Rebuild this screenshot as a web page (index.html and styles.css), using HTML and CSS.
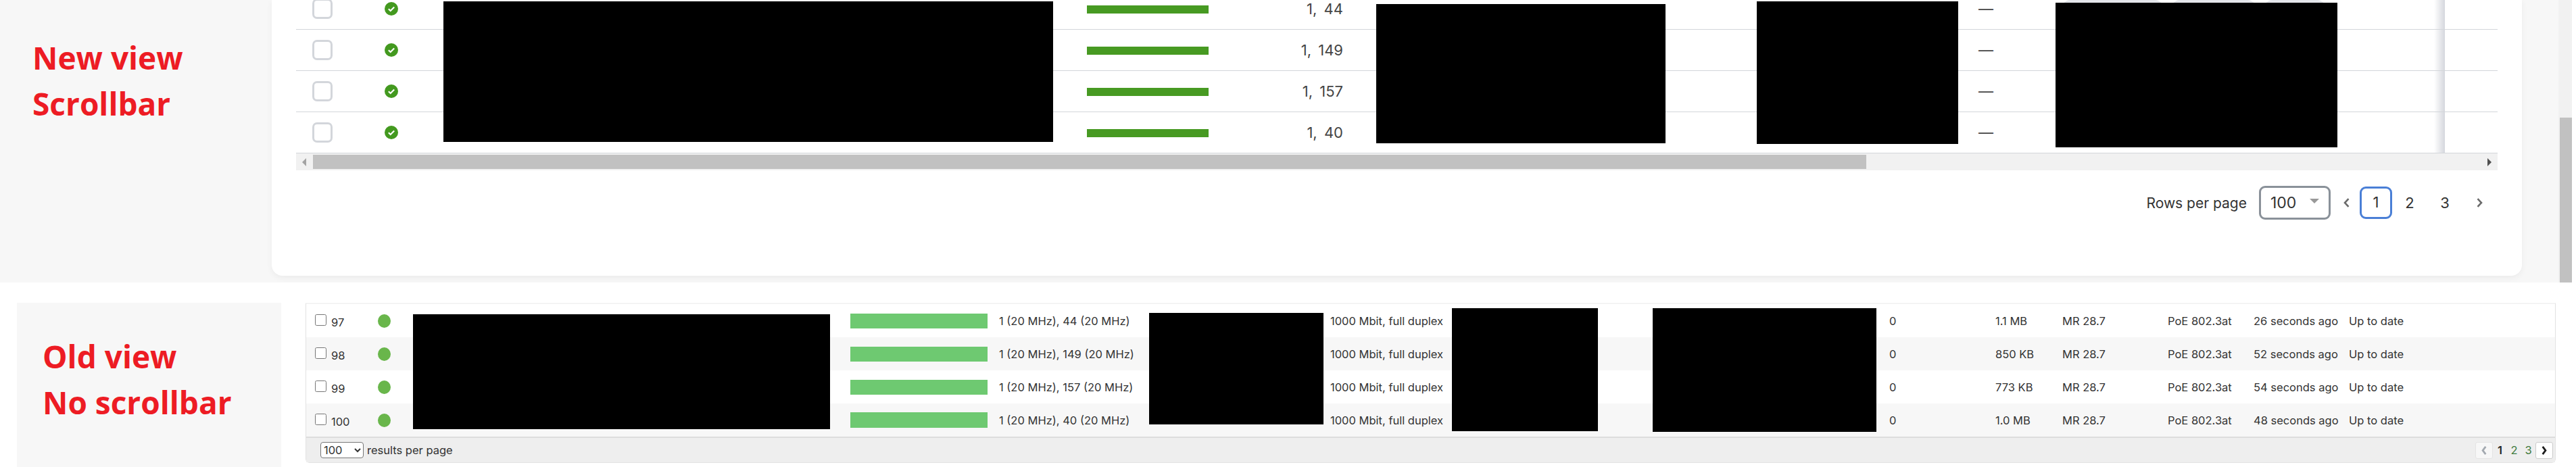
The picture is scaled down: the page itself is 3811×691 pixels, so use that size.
FILE: index.html
```html
<!DOCTYPE html>
<html lang="en">
<head>
  <meta charset="UTF-8" />
  <title>New view vs old view</title>
  <meta name="viewport" content="width=device-width, initial-scale=1.0" />
  <link rel="stylesheet" href="styles.css">
</head>
<body>
  <section class="new-view">
    <div class="label new-label">New view<br />Scrollbar</div>
    <div class="card">
      <div class="new-table">
        <div class="new-rows">
          <div class="new-row">
            <div class="new-check"><span class="box"></span></div>
            <div class="new-status"><svg class="tick" viewBox="0 0 20 20"><circle cx="10" cy="10" r="10" fill="#43991f"/><path d="M5.8 10.3l2.9 2.7 5.5-5.6" fill="none" stroke="#fff" stroke-width="2.2"/></svg></div>
            <div class="new-bar-cell"><span class="new-bar"></span></div>
            <div class="new-channel">1, 44</div>
            <div class="new-dash">—</div>
            <div class="new-tags"><span class="tag tag-a"></span><span class="tag tag-b"></span><span class="tag tag-c"></span></div>
            <div class="new-sticky"></div>
          </div>
          <div class="new-row">
            <div class="new-check"><span class="box"></span></div>
            <div class="new-status"><svg class="tick" viewBox="0 0 20 20"><circle cx="10" cy="10" r="10" fill="#43991f"/><path d="M5.8 10.3l2.9 2.7 5.5-5.6" fill="none" stroke="#fff" stroke-width="2.2"/></svg></div>
            <div class="new-bar-cell"><span class="new-bar"></span></div>
            <div class="new-channel">1, 149</div>
            <div class="new-dash">—</div>
            <div class="new-tags"></div>
            <div class="new-sticky"></div>
          </div>
          <div class="new-row">
            <div class="new-check"><span class="box"></span></div>
            <div class="new-status"><svg class="tick" viewBox="0 0 20 20"><circle cx="10" cy="10" r="10" fill="#43991f"/><path d="M5.8 10.3l2.9 2.7 5.5-5.6" fill="none" stroke="#fff" stroke-width="2.2"/></svg></div>
            <div class="new-bar-cell"><span class="new-bar"></span></div>
            <div class="new-channel">1, 157</div>
            <div class="new-dash">—</div>
            <div class="new-tags"></div>
            <div class="new-sticky"></div>
          </div>
          <div class="new-row">
            <div class="new-check"><span class="box"></span></div>
            <div class="new-status"><svg class="tick" viewBox="0 0 20 20"><circle cx="10" cy="10" r="10" fill="#43991f"/><path d="M5.8 10.3l2.9 2.7 5.5-5.6" fill="none" stroke="#fff" stroke-width="2.2"/></svg></div>
            <div class="new-bar-cell"><span class="new-bar"></span></div>
            <div class="new-channel">1, 40</div>
            <div class="new-dash">—</div>
            <div class="new-tags"></div>
            <div class="new-sticky"></div>
          </div>
        </div>
        <div class="hscroll">
          <span class="arrow-left"></span>
          <span class="hscroll-thumb"></span>
          <span class="arrow-right"></span>
        </div>
      </div>
      <div class="new-pager">
        <span class="rows-label">Rows per page</span>
        <div class="rows-select"><span>100</span><span class="caret"></span></div>
        <svg class="chev chev-prev" viewBox="0 0 9 14"><path d="M7.5 1.2L2 7l5.5 5.8" fill="none" stroke="#6b6b6b" stroke-width="2.6"/></svg>
        <span class="page current">1</span>
        <span class="page">2</span>
        <span class="page">3</span>
        <svg class="chev chev-next" viewBox="0 0 9 14"><path d="M1.5 1.2L7 7l-5.5 5.8" fill="none" stroke="#6b6b6b" stroke-width="2.6"/></svg>
      </div>
    </div>
    <div class="vscroll"><span class="vscroll-thumb"></span></div>
  </section>

  <section class="old-view">
    <div class="label-panel">
      <div class="label old-label">Old view<br />No scrollbar</div>
    </div>
    <div class="old-table">
      <div class="old-row">
        <div class="old-check"><input type="checkbox" /><span>97</span></div>
        <div class="old-name"><span class="dot"></span></div>
        <div><span class="old-bar"></span></div>
        <div>1 (20 MHz), 44 (20 MHz)</div>
        <div>1000 Mbit, full duplex</div>
        <div>0</div>
        <div>1.1 MB</div>
        <div>MR 28.7</div>
        <div>PoE 802.3at</div>
        <div>26 seconds ago</div>
        <div>Up to date</div>
      </div>
      <div class="old-row">
        <div class="old-check"><input type="checkbox" /><span>98</span></div>
        <div class="old-name"><span class="dot"></span></div>
        <div><span class="old-bar"></span></div>
        <div>1 (20 MHz), 149 (20 MHz)</div>
        <div>1000 Mbit, full duplex</div>
        <div>0</div>
        <div>850 KB</div>
        <div>MR 28.7</div>
        <div>PoE 802.3at</div>
        <div>52 seconds ago</div>
        <div>Up to date</div>
      </div>
      <div class="old-row">
        <div class="old-check"><input type="checkbox" /><span>99</span></div>
        <div class="old-name"><span class="dot"></span></div>
        <div><span class="old-bar"></span></div>
        <div>1 (20 MHz), 157 (20 MHz)</div>
        <div>1000 Mbit, full duplex</div>
        <div>0</div>
        <div>773 KB</div>
        <div>MR 28.7</div>
        <div>PoE 802.3at</div>
        <div>54 seconds ago</div>
        <div>Up to date</div>
      </div>
      <div class="old-row">
        <div class="old-check"><input type="checkbox" /><span>100</span></div>
        <div class="old-name"><span class="dot"></span></div>
        <div><span class="old-bar"></span></div>
        <div>1 (20 MHz), 40 (20 MHz)</div>
        <div>1000 Mbit, full duplex</div>
        <div>0</div>
        <div>1.0 MB</div>
        <div>MR 28.7</div>
        <div>PoE 802.3at</div>
        <div>48 seconds ago</div>
        <div>Up to date</div>
      </div>
      <div class="old-footer">
        <select class="old-select"><option>100</option></select>
        <span class="results-label">results per page</span>
        <div class="old-pager">
          <span class="old-btn"><svg viewBox="0 0 10 16"><path d="M7.5 2L3 8l4.5 6" fill="none" stroke="#a3a9b0" stroke-width="3"/></svg></span>
          <span class="old-page active">1</span>
          <span class="old-page">2</span>
          <span class="old-page">3</span>
          <span class="old-btn enabled"><svg viewBox="0 0 10 16"><path d="M2.5 2L7 8l-4.5 6" fill="none" stroke="#1c1c1c" stroke-width="3"/></svg></span>
        </div>
      </div>
    </div>
  </section>

  <!-- redacted blocks sit over the table content -->
  <div class="redact r1"></div>
  <div class="redact r2"></div>
  <div class="redact r3"></div>
  <div class="redact r4"></div>
  <div class="redact r5"></div>
  <div class="redact r6"></div>
  <div class="redact r7"></div>
  <div class="redact r8"></div>
</body>
</html>
```

FILE: styles.css
```css
body {
  margin: 0;
  background: #fff;
  font-family: 'Inter', 'Liberation Sans', sans-serif;
  color: #333;
  overflow: hidden;
  position: relative;
  height: 691px;
}
.label {
  font-family: 'Open Sans', 'Liberation Sans', sans-serif;
  font-weight: 700;
  font-size: 46px;
  line-height: 68px;
  color: #ed1c24;
  white-space: nowrap;
}

/* new view */
.new-view {
  display: flex;
  width: 3805px;
  height: 418px;
  background: #f7f7f7;
}
.new-label {
  width: 402px;
  padding: 51px 0 0 48px;
  box-sizing: border-box;
  flex: none;
}
.card {
  width: 3329px;
  height: 408px;
  flex: none;
  box-sizing: border-box;
  padding: 0 36px;
  background: #fff;
  border-radius: 0 0 16px 16px;
  box-shadow: 0 3px 10px rgba(0,0,0,0.05);
  margin-right: 54px;
}
.new-table {
  height: 252px;
  display: flex;
  flex-direction: column;
  justify-content: flex-end;
  overflow: hidden;
}
.new-rows {
  display: flex;
  flex-direction: column;
}
.new-row {
  display: grid;
  grid-template-columns: 110px 62px 998px 180px 199px 940px 123px 551px 94px;
  height: 61px;
  flex: none;
  box-sizing: border-box;
  border-bottom: 1px solid #d3d6da;
  align-items: center;
  font-size: 22px;
  line-height: 22px;
}
.new-check {
  padding-left: 24px;
  display: flex;
}
.box {
  width: 30px;
  height: 30px;
  box-sizing: border-box;
  border: 3px solid #d3d6db;
  border-radius: 7px;
}
.new-status {
  display: flex;
  justify-content: center;
}
.tick {
  width: 20px;
  height: 20px;
  display: block;
}
.new-bar-cell {
  grid-column: 4;
  display: flex;
  padding-top: 2px;
}
.new-bar {
  width: 180px;
  height: 12px;
  background: #479a22;
}
.new-channel {
  text-align: right;
  word-spacing: 4px;
  color: #444;
}
.new-dash {
  grid-column: 7;
  color: #444;
}
.new-tags {
  display: flex;
  gap: 11px;
}
.tag {
  height: 26px;
  background: #e3e5ea;
  border-radius: 13px;
}
.tag-a { width: 151px; }
.tag-b { width: 126px; }
.tag-c { width: 92px; }
.new-sticky {
  align-self: stretch;
  background: linear-gradient(to right, rgba(213,215,221,0), #d5d7dd) no-repeat 0 0 / 16px 100%;
}
.hscroll {
  height: 25px;
  flex: none;
  background: #f1f1f1;
  display: flex;
  align-items: center;
}
.arrow-left,
.arrow-right {
  width: 0;
  height: 0;
  border-top: 6px solid transparent;
  border-bottom: 6px solid transparent;
  flex: none;
}
.arrow-left {
  border-right: 6px solid #a3a3a3;
  margin: 0 10px 0 9px;
}
.arrow-right {
  border-left: 6px solid #505050;
  margin-left: 919px;
}
.hscroll-thumb {
  width: 2298px;
  height: 21px;
  background: #c1c1c1;
  flex: none;
}
.new-pager {
  display: flex;
  align-items: center;
  justify-content: flex-end;
  height: 50px;
  margin-top: 23px;
  padding-right: 22px;
  font-size: 21px;
  color: #333;
}
.rows-label {
  margin-right: 18px;
}
.rows-select {
  width: 106px;
  height: 50px;
  box-sizing: border-box;
  border: 3px solid #8a9199;
  border-radius: 9px;
  display: flex;
  align-items: center;
  justify-content: space-between;
  padding: 0 14px;
  font-size: 23px;
}
.caret {
  border-left: 7px solid transparent;
  border-right: 7px solid transparent;
  border-top: 7px solid #999;
  margin-bottom: 6px;
}
.chev {
  width: 9px;
  height: 14px;
  flex: none;
}
.chev-prev {
  margin: 0 15px 0 19px;
}
.chev-next {
  margin-left: 21px;
}
.page {
  width: 52px;
  text-align: center;
  font-size: 22px;
}
.page.current {
  width: 48px;
  height: 48px;
  box-sizing: border-box;
  border: 3px solid #4a7fd6;
  border-radius: 9px;
  line-height: 41px;
}
.vscroll {
  width: 20px;
  flex: none;
  box-sizing: border-box;
  background: #f1f1f1;
  display: flex;
  align-items: flex-end;
  padding-left: 2px;
}
.vscroll-thumb {
  width: 18px;
  height: 244px;
  background: #c1c1c1;
}

/* old view */
.old-view {
  display: flex;
  padding: 30px 0 0 25px;
}
.label-panel {
  width: 391px;
  height: 243px;
  background: #f7f7f7;
  flex: none;
  padding: 45px 0 0 38px;
  box-sizing: border-box;
}
.old-table {
  width: 3329px;
  height: 237px;
  margin-left: 36px;
  flex: none;
  box-sizing: border-box;
  border: 1px solid #e2e2e2;
  border-top: 2px solid #f4f4f4;
  border-radius: 0 0 6px 6px;
  font-size: 16.5px;
  color: #333;
}
.old-row {
  display: grid;
  grid-template-columns: 106px 699px 220px 490px 827px 157px 99px 156px 127px 141px 1fr;
  height: 49px;
  align-items: center;
  white-space: nowrap;
}
.old-row:nth-child(even) {
  background: #f7f7f7;
}
.old-check {
  display: flex;
  align-items: center;
  padding-left: 13px;
}
.old-check input {
  width: 17px;
  height: 17px;
  margin: 0 7px 3px 0;
}
.old-check span {
  margin-top: 5px;
}
.old-name {
  display: flex;
}
.dot {
  width: 19px;
  height: 20px;
  background: #69b64b;
  border-radius: 50%;
}
.old-bar {
  display: block;
  width: 203px;
  height: 22px;
  background: #6ec971;
}
.old-row:nth-child(4) .old-bar {
  height: 23px;
}
.old-footer {
  height: 38px;
  display: flex;
  align-items: center;
  background: #eee;
  border-top: 2px solid #ddd;
  box-sizing: border-box;
  padding: 0 3px 0 21px;
}
.old-select {
  width: 64px;
  height: 24px;
  font-family: inherit;
  font-size: 16.5px;
  background: #fff;
  border: 1px solid #767676;
  border-radius: 4px;
  color: #333;
}
.results-label {
  margin-left: 5px;
}
.old-pager {
  margin-left: auto;
  display: flex;
  align-items: center;
}
.old-btn {
  width: 26px;
  height: 25px;
  box-sizing: border-box;
  background: #f7f7f7;
  border: 1px solid #e4e4e4;
  border-radius: 3px;
  display: flex;
  align-items: center;
  justify-content: center;
}
.old-btn.enabled {
  background: #fff;
  border-color: #ccc;
}
.old-btn svg {
  width: 10px;
  height: 15px;
}
.old-page {
  width: 21px;
  text-align: center;
  color: #3d7a3d;
}
.old-page.active {
  color: #222;
  font-weight: 600;
}

/* redactions */
.redact {
  position: absolute;
  background: #000;
}
.r1 { left: 656px; top: 2px; width: 902px; height: 208px; }
.r2 { left: 2036px; top: 6px; width: 428px; height: 206px; }
.r3 { left: 2599px; top: 2px; width: 298px; height: 211px; }
.r4 { left: 3041px; top: 4px; width: 417px; height: 214px; }
.r5 { left: 611px; top: 465px; width: 617px; height: 170px; }
.r6 { left: 1700px; top: 463px; width: 258px; height: 165px; }
.r7 { left: 2148px; top: 456px; width: 216px; height: 182px; }
.r8 { left: 2445px; top: 456px; width: 331px; height: 183px; }
```
